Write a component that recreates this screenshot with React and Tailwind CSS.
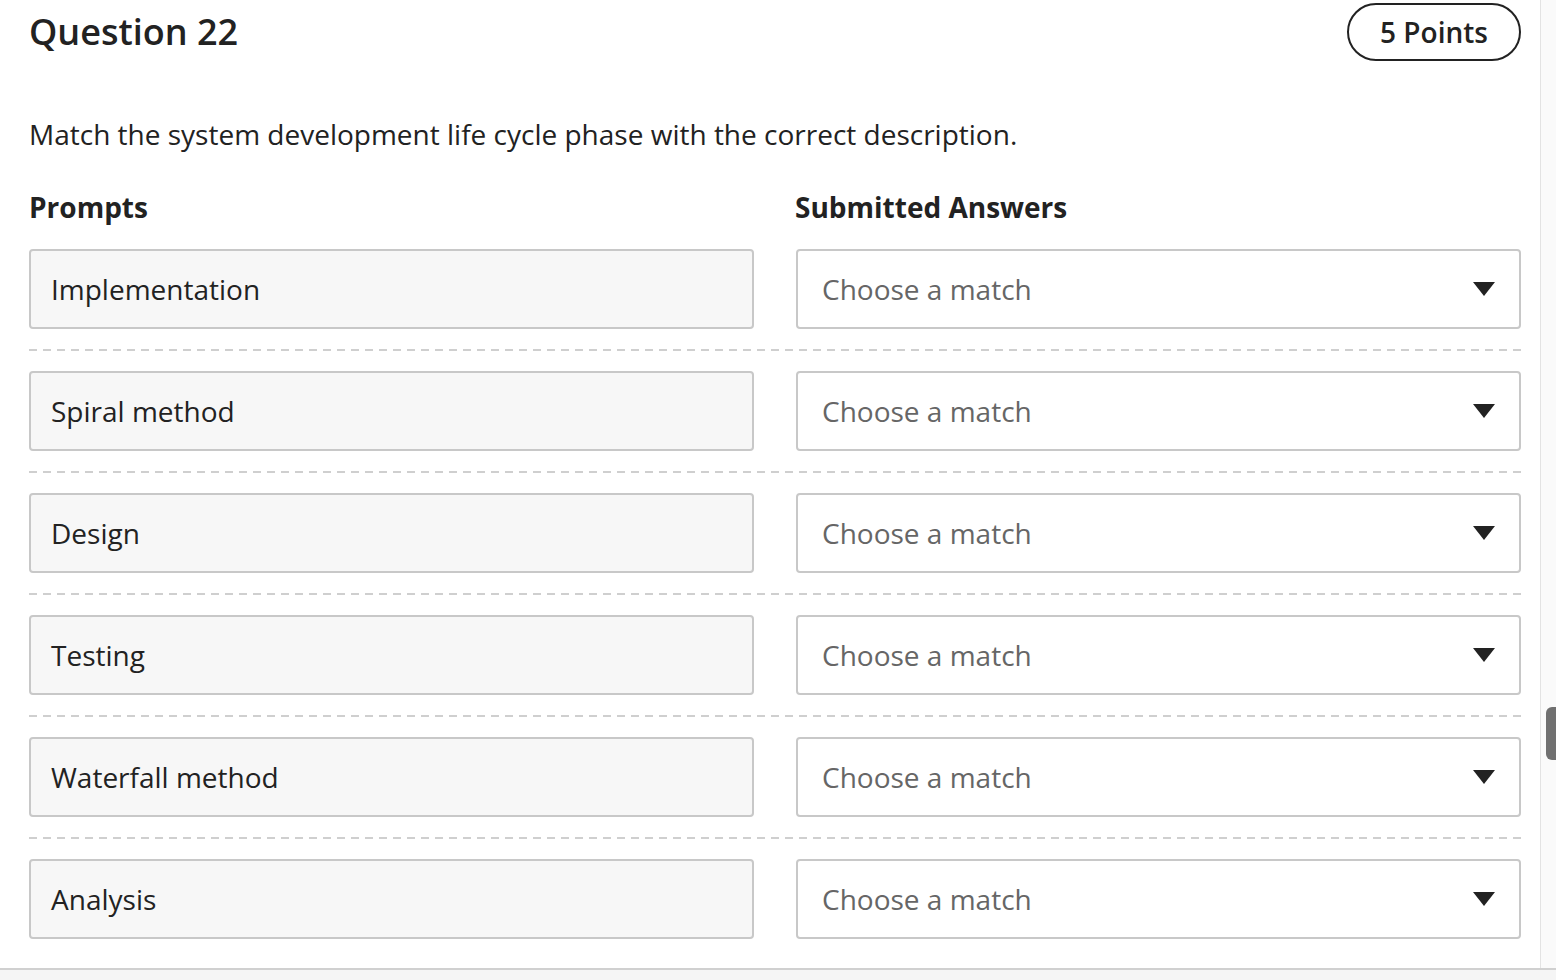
import React from 'react';

const prompts = ['Implementation', 'Spiral method', 'Design', 'Testing', 'Waterfall method', 'Analysis'];

const font = { fontFamily: '"Open Sans", "Noto Sans", sans-serif' };

const Caret = () => (
  <svg width="22" height="14" viewBox="0 0 22 14" className="shrink-0">
    <path d="M0 0 H22 L11 14 Z" fill="#222" />
  </svg>
);

const MatchRow = ({ label, last }) => (
  <div>
    <div className="grid grid-cols-2 gap-[42px]">
      <div className="h-[80px] flex items-center pl-[20px] bg-[#f7f7f7] border-2 border-[#c8c8c8] rounded-[4px] text-[28px] text-[#222]">
        {label}
      </div>
      <div className="h-[80px] flex items-center justify-between pl-[24px] pr-[24px] bg-white border-2 border-[#c8c8c8] rounded-[4px] text-[28px] text-[#666]">
        <span>Choose a match</span>
        <Caret />
      </div>
    </div>
    {!last && (
      <div className="my-[20px] h-[2px] bg-[repeating-linear-gradient(to_right,#cfcfcf_0,#cfcfcf_8px,transparent_8px,transparent_14px)]" />
    )}
  </div>
);

export default function App() {
  return (
    <div className="h-screen flex flex-col bg-white overflow-hidden" style={font}>
      <div className="h-[968px] flex shrink-0">
        <div className="w-[1540px] pl-[29px] pr-[19px] pt-[3px]">
          <div className="flex items-center justify-between">
            <h1 className="text-[36px] leading-[58px] font-semibold text-[#222]">Question 22</h1>
            <div className="w-[174px] h-[58px] rounded-full border-2 border-[#222] flex items-center justify-center text-[28px] font-semibold text-[#222]">
              5 Points
            </div>
          </div>
          <p className="mt-[53px] text-[28px] leading-[40px] text-[#222]">
            Match the system development life cycle phase with the correct description.
          </p>
          <div className="mt-[35px] grid grid-cols-2 gap-[42px] text-[28px] leading-[36px] font-bold text-[#222]">
            <div>Prompts</div>
            <div className="-ml-[1px]">Submitted Answers</div>
          </div>
          <div className="mt-[24px]">
            {prompts.map((p, i) => (
              <MatchRow key={p} label={p} last={i === prompts.length - 1} />
            ))}
          </div>
        </div>
        <div className="relative flex-1 bg-[#fafafa] border-l border-[#e3e3e3]">
          <div className="absolute left-[5px] right-0 top-[707px] h-[53px] bg-[#707070] rounded-l-[6px]" />
        </div>
      </div>
      <div className="flex-1 bg-[#f5f5f5] border-t-2 border-[#d0d0d0]" />
    </div>
  );
}
